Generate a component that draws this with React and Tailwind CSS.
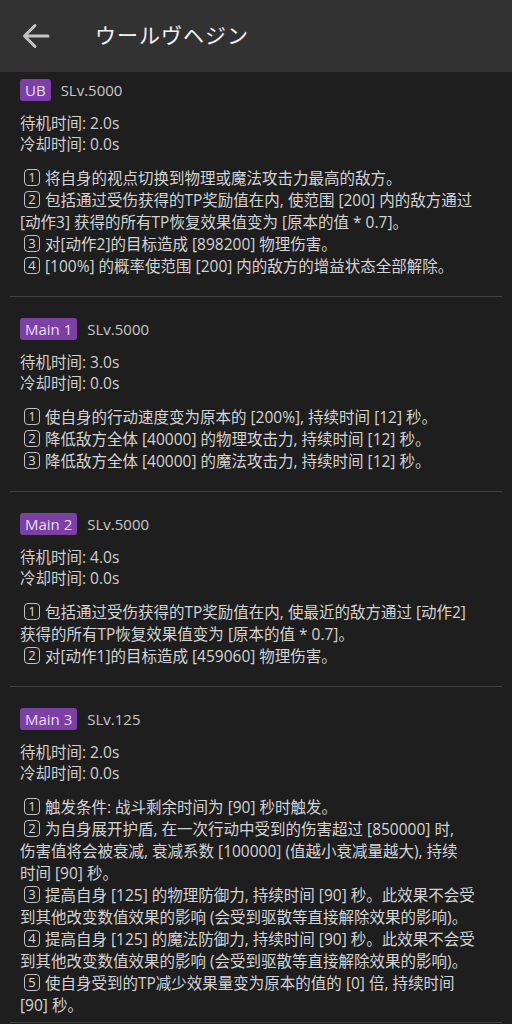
import React from "react";

const font = { fontFamily: '"Open Sans", "Noto Sans CJK SC", "Noto Sans", sans-serif' };

function Num({ n }) {
  return (
    <span className="ml-[4px] mr-[5px] mt-[2px] inline-flex h-[17px] w-[16px] items-center justify-center rounded-[4px] border-[1.5px] border-[#c2c2c2] align-top text-[13px] leading-none text-[#dadada]">
      {n}
    </span>
  );
}

const sections = [
  {
    tag: "UB",
    lv: "SLv.5000",
    wait: "2.0s",
    cool: "0.0s",
    pt: "pt-[7px]",
    pb: "pb-[19px]",
    items: [
      ["将自身的视点切换到物理或魔法攻击力最高的敌方。"],
      ["包括通过受伤获得的TP奖励值在内, 使范围 [200] 内的敌方通过", "[动作3] 获得的所有TP恢复效果值变为 [原本的值 * 0.7]。"],
      ["对[动作2]的目标造成 [898200] 物理伤害。"],
      ["[100%] 的概率使范围 [200] 内的敌方的增益状态全部解除。"],
    ],
  },
  {
    tag: "Main 1",
    lv: "SLv.5000",
    wait: "3.0s",
    cool: "0.0s",
    pt: "pt-[21px]",
    pb: "pb-[19px]",
    items: [
      ["使自身的行动速度变为原本的 [200%], 持续时间 [12] 秒。"],
      ["降低敌方全体 [40000] 的物理攻击力, 持续时间 [12] 秒。"],
      ["降低敌方全体 [40000] 的魔法攻击力, 持续时间 [12] 秒。"],
    ],
  },
  {
    tag: "Main 2",
    lv: "SLv.5000",
    wait: "4.0s",
    cool: "0.0s",
    pt: "pt-[21px]",
    pb: "pb-[19px]",
    items: [
      ["包括通过受伤获得的TP奖励值在内, 使最近的敌方通过 [动作2]", "获得的所有TP恢复效果值变为 [原本的值 * 0.7]。"],
      ["对[动作1]的目标造成 [459060] 物理伤害。"],
    ],
  },
  {
    tag: "Main 3",
    lv: "SLv.125",
    wait: "2.0s",
    cool: "0.0s",
    pt: "pt-[21px]",
    pb: "pb-[6px]",
    items: [
      ["触发条件: 战斗剩余时间为 [90] 秒时触发。"],
      ["为自身展开护盾, 在一次行动中受到的伤害超过 [850000] 时,", "伤害值将会被衰减, 衰减系数 [100000] (值越小衰减量越大), 持续", "时间 [90] 秒。"],
      ["提高自身 [125] 的物理防御力, 持续时间 [90] 秒。此效果不会受", "到其他改变数值效果的影响 (会受到驱散等直接解除效果的影响)。"],
      ["提高自身 [125] 的魔法防御力, 持续时间 [90] 秒。此效果不会受", "到其他改变数值效果的影响 (会受到驱散等直接解除效果的影响)。"],
      ["使自身受到的TP减少效果量变为原本的值的 [0] 倍, 持续时间", "[90] 秒。"],
    ],
  },
];

function Section({ s }) {
  return (
    <div className={`${s.pt} ${s.pb} px-[20px]`}>
      <div className="flex h-[22px] items-center gap-[10px]">
        <span className="inline-flex h-[22px] items-center rounded-[3px] bg-[#7b3fa6] px-[5px] text-[15px] leading-none text-[#eadcf5]">
          {s.tag}
        </span>
        <span className="text-[15px] leading-none text-[#c8c8c8]">{s.lv}</span>
      </div>
      <div className="mt-[12px] text-[15.5px] text-[#d0d0d0]">
        <div className="h-[21px] leading-[21px]">待机时间: {s.wait}</div>
        <div className="h-[21px] leading-[21px]">冷却时间: {s.cool}</div>
      </div>
      <div className="mt-[12px] text-[15.5px] text-[#d4d4d4]">
        {s.items.map((lines, i) => (
          <div key={i}>
            {lines.map((l, j) => (
              <div key={j} className="h-[22px] whitespace-nowrap leading-[22px]">
                {j === 0 && <Num n={i + 1} />}
                {l}
              </div>
            ))}
          </div>
        ))}
      </div>
    </div>
  );
}

export default function App() {
  return (
    <div style={font} className="min-h-[1024px] w-[512px] bg-[#1e1e1e]">
      <div className="flex h-[72px] items-center bg-[#323232]">
        <svg className="ml-[20px]" width="32" height="32" viewBox="0 0 32 32" fill="none">
          <path d="M28 16H5M15 5.5L4.5 16L15 26.5" stroke="#c4c4c4" strokeWidth="3" strokeLinecap="round" strokeLinejoin="round" />
        </svg>
        <span className="ml-[43px] text-[21px] tracking-[1px] text-[#f2f2f2]">ウールヴヘジン</span>
      </div>
      {sections.map((s, i) => (
        <div key={i}>
          <Section s={s} />
          <div className="mx-[10px] h-px bg-[#414141]" />
        </div>
      ))}
    </div>
  );
}
